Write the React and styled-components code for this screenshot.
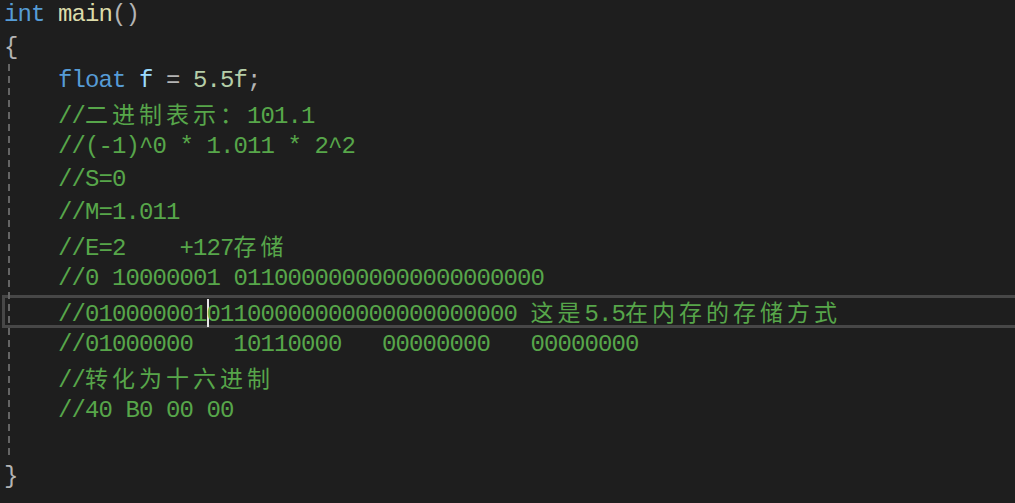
import React from "react";
import styled, { createGlobalStyle } from "styled-components";

const Global = createGlobalStyle`
  html, body {
    margin: 0;
    padding: 0;
    background: #1e1e1e;
    overflow: hidden;
  }
`;

const Editor = styled.div`
  position: relative;
  width: 1015px;
  height: 503px;
  background: #1e1e1e;
  overflow: hidden;
  display: flex;
  flex-direction: column;
  margin-top: -2px;
  font-family: "Liberation Mono", "DejaVu Sans Mono", monospace;
  font-size: 24px;
  letter-spacing: -0.9px;
  color: #dcdcdc;
`;

const Line = styled.div`
  flex: none;
  box-sizing: border-box;
  height: 33px;
  line-height: 33px;
  white-space: pre;
  padding-left: ${(p) => (p.$indent ? 58 : 4)}px;
`;

const CurrentLine = styled.div`
  flex: none;
  box-sizing: border-box;
  height: 33px;
  line-height: 27px;
  white-space: pre;
  margin-left: 2px;
  width: 1040px;
  padding-left: 53px;
  border: 3px solid #474747;
`;

const Tok = styled.span`
  color: ${(p) => p.$c};
`;

const Cjk = styled.span`
  font-family: "Noto Sans CJK SC", sans-serif;
  font-size: 23px;
  letter-spacing: 4px;
  color: #57a64a;
`;

const Caret = styled.span`
  display: inline-block;
  width: 2px;
  height: 28px;
  margin-right: -2px;
  vertical-align: -6px;
  background: #e6e6e6;
`;

const Guide = styled.div`
  position: absolute;
  left: 8px;
  top: 66px;
  width: 2px;
  height: 396px;
  background: repeating-linear-gradient(
    to bottom,
    #646464 0px,
    #646464 7px,
    transparent 7px,
    transparent 12px
  );
`;

const KW = "#569cd6";
const FN = "#dcdcaa";
const PUN = "#b4b4b4";
const VAR = "#9cdcfe";
const NUM = "#b5cea8";
const CM = "#57a64a";

export default function App() {
  return (
    <>
      <Global />
      <Editor>
        <Line>
          <Tok $c={KW}>int</Tok> <Tok $c={FN}>main</Tok>
          <Tok $c={PUN}>()</Tok>
        </Line>
        <Line>
          <Tok $c={PUN}>{"{"}</Tok>
        </Line>
        <Line $indent>
          <Tok $c={KW}>float</Tok> <Tok $c={VAR}>f</Tok> <Tok $c={PUN}>=</Tok>{" "}
          <Tok $c={NUM}>5.5f</Tok>
          <Tok $c={PUN}>;</Tok>
        </Line>
        <Line $indent>
          <Tok $c={CM}>//</Tok>
          <Cjk>二进制表示：</Cjk>
          <Tok $c={CM}>101.1</Tok>
        </Line>
        <Line $indent>
          <Tok $c={CM}>//(-1)^0 * 1.011 * 2^2</Tok>
        </Line>
        <Line $indent>
          <Tok $c={CM}>//S=0</Tok>
        </Line>
        <Line $indent>
          <Tok $c={CM}>//M=1.011</Tok>
        </Line>
        <Line $indent>
          <Tok $c={CM}>{"//E=2    +127"}</Tok>
          <Cjk>存储</Cjk>
        </Line>
        <Line $indent>
          <Tok $c={CM}>//0 10000001 01100000000000000000000</Tok>
        </Line>
        <CurrentLine>
          <Tok $c={CM}>//010000001</Tok>
          <Caret />
          <Tok $c={CM}>01100000000000000000000 </Tok>
          <Cjk>这是</Cjk>
          <Tok $c={CM}>5.5</Tok>
          <Cjk>在内存的存储方式</Cjk>
        </CurrentLine>
        <Line $indent>
          <Tok $c={CM}>{"//01000000   10110000   00000000   00000000"}</Tok>
        </Line>
        <Line $indent>
          <Tok $c={CM}>//</Tok>
          <Cjk>转化为十六进制</Cjk>
        </Line>
        <Line $indent>
          <Tok $c={CM}>//40 B0 00 00</Tok>
        </Line>
        <Line $indent />
        <Line>
          <Tok $c={PUN}>{"}"}</Tok>
        </Line>
        <Guide />
      </Editor>
    </>
  );
}
